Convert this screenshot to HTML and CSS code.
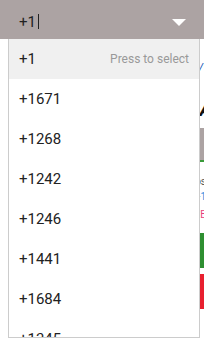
FILE: index.html
```html
<!DOCTYPE html>
<html lang="es">
<head>
    <meta charset="UTF-8">
    <meta name="viewport" content="width=device-width, initial-scale=1.0">
    <title>Código de país</title>
    <link rel="stylesheet" href="styles.css">
</head>
<body>
    <div class="field">
        <span class="field-value">+1</span>
        <span class="caret"></span>
        <span class="arrow"></span>
    </div>
    <div class="page">
        <p class="crumb">Inicio /</p>
        <h2 class="title">Nueva cuenta A</h2>
        <div class="input-bar"></div>
        <p class="hint">Teléfonos</p>
        <p class="hint link">+1</p>
        <p class="hint warn">'E</p>
        <button class="btn btn-ok">Guardar</button>
        <button class="btn btn-cancel">Cancelar</button>
    </div>
    <ul class="options">
        <li class="option active"><span>+1</span><span class="option-hint">Press to select</span></li>
        <li class="option">+1671</li>
        <li class="option">+1268</li>
        <li class="option">+1242</li>
        <li class="option">+1246</li>
        <li class="option">+1441</li>
        <li class="option">+1684</li>
        <li class="option">+1345</li>
    </ul>
</body>
</html>
```

FILE: styles.css
```css
body {
    margin: 0;
    background-color: #ffffff;
    color: #222222;
    font-family: Roboto, "Noto Sans", sans-serif;
    overflow: hidden;
    position: relative;
    height: 344px;
}
.field {
    display: flex;
    align-items: center;
    height: 39px;
    padding: 4px 18px 0 19px;
    box-sizing: border-box;
    background-color: #aca3a3;
}
.field-value {
    font-size: 15px;
    color: #222222;
}
.caret {
    width: 1px;
    height: 15px;
    margin-left: 2px;
    background-color: #222222;
}
.arrow {
    margin-left: auto;
    margin-top: 2px;
    border-left: 7px solid transparent;
    border-right: 7px solid transparent;
    border-top: 7px solid #ffffff;
}
.page {
    display: flex;
    flex-direction: column;
    align-items: flex-end;
    padding-left: 8px;
}
.crumb {
    margin: 22px 1px 0 0;
    font-size: 12px;
    font-style: italic;
    color: #1e5bb8;
}
.title {
    margin: 23px -8px 0 0;
    font-size: 19px;
    font-weight: bold;
    font-style: italic;
    color: #111111;
}
.input-bar {
    width: 100%;
    height: 32px;
    margin-top: 7px;
    background-color: #aca3a3;
    border-bottom: 2px solid #3a9a3a;
}
.hint {
    margin: 14px -2px 0 0;
    font-size: 10px;
    color: #555555;
}
.link {
    margin-top: 4px;
    color: #2a8ee0;
}
.warn {
    margin-top: 7px;
    color: #e8407a;
}
.btn {
    width: 100%;
    height: 35px;
    border: none;
    color: #ffffff;
    font-size: 14px;
}
.btn-ok {
    margin-top: 13px;
    background-color: #2e8f31;
}
.btn-cancel {
    margin-top: 6px;
    background-color: #e8202f;
}
.options {
    position: absolute;
    top: 39px;
    left: 8px;
    width: 192px;
    height: 299px;
    margin: 0;
    padding: 0;
    list-style: none;
    box-sizing: border-box;
    background-color: #ffffff;
    border: 1px solid #cccccc;
    border-top: none;
    overflow: hidden;
}
.option {
    display: flex;
    align-items: center;
    justify-content: space-between;
    height: 40px;
    padding: 0 10px;
    font-size: 15px;
    color: #222222;
}
.active {
    background-color: #f0f0f0;
}
.option-hint {
    font-size: 12px;
    color: #999999;
}
```
